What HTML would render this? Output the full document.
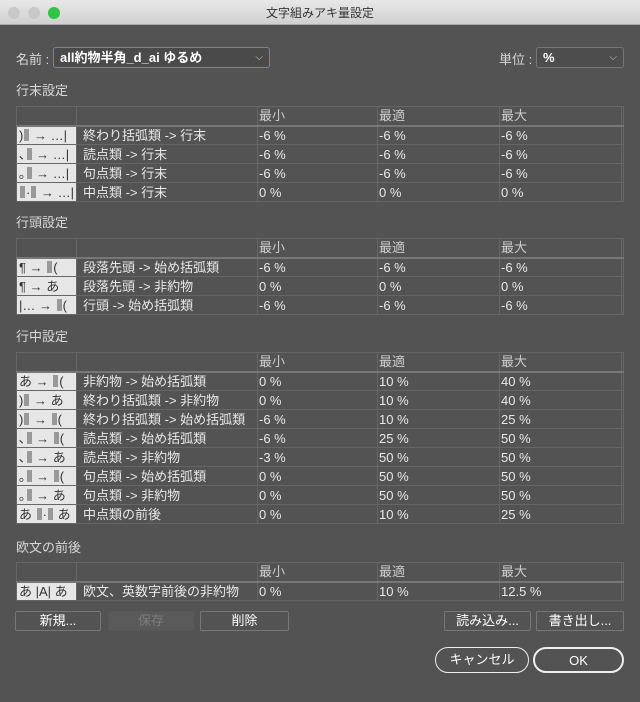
<!DOCTYPE html>
<html><head><meta charset="utf-8"><style>
*{margin:0;padding:0;box-sizing:border-box}
body{width:640px;height:702px;background:#535353;font-family:"Liberation Sans","Noto Sans CJK JP",sans-serif;color:#e6e6e6;font-size:12px;position:relative;overflow:hidden}
.tb{position:absolute;left:0;top:0;width:640px;height:25px;background:linear-gradient(#e8e8e8,#d0d0d0);border-bottom:1px solid #aaa;text-align:center;line-height:26px;font-size:12px;color:#333}
.dot{position:absolute;top:7px;width:12px;height:12px;border-radius:50%}
.lbl{position:absolute;font-size:13px;color:#d8d8d8}
table{position:absolute;left:16px;width:608px;border-collapse:collapse;table-layout:fixed;border:1px solid #666}
td{height:19px;border:1px solid #666;padding:0 0 0 1px;font-size:13px;line-height:17px;white-space:nowrap;overflow:hidden;color:#e8e8e8}
tr.h td{border-bottom:2px solid #777;color:#ccc}
td.ic{background:#e6e6e6;color:#333;padding-left:2px;font-size:13px}
td.l{padding-left:6px}
.b{display:inline-block;width:5px;height:12px;background:#999;vertical-align:-1px;margin:0 1px}
.btn{position:absolute;height:20px;border:1px solid #777;border-radius:2px;text-align:center;line-height:18px;font-size:13px;color:#fff}
.rb{position:absolute;height:26px;border:1.5px solid #eee;border-radius:13px;text-align:center;line-height:23px;font-size:13px;color:#fff}
.sel{position:absolute;top:47px;height:21px;border:1px solid #777;border-radius:3px;padding-left:6px;line-height:19px;font-size:13px;font-weight:bold;color:#fff;background:#4d4d4d}
.chev{position:absolute;right:6px;top:0;font-size:10px;color:#ccc;font-weight:normal}
</style></head><body>
<div class="tb">文字組みアキ量設定</div>
<div class="dot" style="left:8px;background:#c8c8c8"></div>
<div class="dot" style="left:28px;background:#c8c8c8"></div>
<div class="dot" style="left:48px;background:#2ac840"></div>

<div class="lbl" style="left:16px;top:49px">名前 :</div>
<div class="sel" style="left:53px;width:217px;border:1px solid #4a90d9;background:#4a4a4a">all約物半角_d_ai ゆるめ<span class="chev">⌵</span></div>
<div class="lbl" style="left:499px;top:49px">単位 :</div>
<div class="sel" style="left:536px;width:88px">%<span class="chev">⌵</span></div>

<div class="lbl" style="left:16px;top:80px">行末設定</div>
<table style="top:106px"><colgroup><col style="width:60px"><col style="width:181px"><col style="width:120px"><col style="width:122px"><col style="width:122px"><col></colgroup>
<tr class="h"><td></td><td></td><td>最小</td><td>最適</td><td>最大</td><td></td></tr>
<tr><td class="ic">)<span class="b"></span> → …|</td><td class="l">終わり括弧類 -&gt; 行末</td><td>-6 %</td><td>-6 %</td><td>-6 %</td><td></td></tr>
<tr><td class="ic">､<span class="b"></span> → …|</td><td class="l">読点類 -&gt; 行末</td><td>-6 %</td><td>-6 %</td><td>-6 %</td><td></td></tr>
<tr><td class="ic">｡<span class="b"></span> → …|</td><td class="l">句点類 -&gt; 行末</td><td>-6 %</td><td>-6 %</td><td>-6 %</td><td></td></tr>
<tr><td class="ic"><span class="b"></span>·<span class="b"></span> → …|</td><td class="l">中点類 -&gt; 行末</td><td>0 %</td><td>0 %</td><td>0 %</td><td></td></tr>
</table>

<div class="lbl" style="left:16px;top:212px">行頭設定</div>
<table style="top:238px"><colgroup><col style="width:60px"><col style="width:181px"><col style="width:120px"><col style="width:122px"><col style="width:122px"><col></colgroup>
<tr class="h"><td></td><td></td><td>最小</td><td>最適</td><td>最大</td><td></td></tr>
<tr><td class="ic">¶ → <span class="b"></span>(</td><td class="l">段落先頭 -&gt; 始め括弧類</td><td>-6 %</td><td>-6 %</td><td>-6 %</td><td></td></tr>
<tr><td class="ic">¶ → あ</td><td class="l">段落先頭 -&gt; 非約物</td><td>0 %</td><td>0 %</td><td>0 %</td><td></td></tr>
<tr><td class="ic">|… → <span class="b"></span>(</td><td class="l">行頭 -&gt; 始め括弧類</td><td>-6 %</td><td>-6 %</td><td>-6 %</td><td></td></tr>
</table>

<div class="lbl" style="left:16px;top:326px">行中設定</div>
<table style="top:352px"><colgroup><col style="width:60px"><col style="width:181px"><col style="width:120px"><col style="width:122px"><col style="width:122px"><col></colgroup>
<tr class="h"><td></td><td></td><td>最小</td><td>最適</td><td>最大</td><td></td></tr>
<tr><td class="ic">あ → <span class="b"></span>(</td><td class="l">非約物 -&gt; 始め括弧類</td><td>0 %</td><td>10 %</td><td>40 %</td><td></td></tr>
<tr><td class="ic">)<span class="b"></span> → あ</td><td class="l">終わり括弧類 -&gt; 非約物</td><td>0 %</td><td>10 %</td><td>40 %</td><td></td></tr>
<tr><td class="ic">)<span class="b"></span> → <span class="b"></span>(</td><td class="l">終わり括弧類 -&gt; 始め括弧類</td><td>-6 %</td><td>10 %</td><td>25 %</td><td></td></tr>
<tr><td class="ic">､<span class="b"></span> → <span class="b"></span>(</td><td class="l">読点類 -&gt; 始め括弧類</td><td>-6 %</td><td>25 %</td><td>50 %</td><td></td></tr>
<tr><td class="ic">､<span class="b"></span> → あ</td><td class="l">読点類 -&gt; 非約物</td><td>-3 %</td><td>50 %</td><td>50 %</td><td></td></tr>
<tr><td class="ic">｡<span class="b"></span> → <span class="b"></span>(</td><td class="l">句点類 -&gt; 始め括弧類</td><td>0 %</td><td>50 %</td><td>50 %</td><td></td></tr>
<tr><td class="ic">｡<span class="b"></span> → あ</td><td class="l">句点類 -&gt; 非約物</td><td>0 %</td><td>50 %</td><td>50 %</td><td></td></tr>
<tr><td class="ic">あ <span class="b"></span>·<span class="b"></span> あ</td><td class="l">中点類の前後</td><td>0 %</td><td>10 %</td><td>25 %</td><td></td></tr>
</table>

<div class="lbl" style="left:16px;top:537px">欧文の前後</div>
<table style="top:562px"><colgroup><col style="width:60px"><col style="width:181px"><col style="width:120px"><col style="width:122px"><col style="width:122px"><col></colgroup>
<tr class="h"><td></td><td></td><td>最小</td><td>最適</td><td>最大</td><td></td></tr>
<tr><td class="ic">あ |A| あ</td><td class="l">欧文、英数字前後の非約物</td><td>0 %</td><td>10 %</td><td>12.5 %</td><td></td></tr>
</table>

<div class="btn" style="left:15px;top:611px;width:86px">新規...</div>
<div class="btn" style="left:108px;top:611px;width:86px;border-color:#585858;background:#5a5a5a;color:#7c7c7c">保存</div>
<div class="btn" style="left:200px;top:611px;width:89px">削除</div>
<div class="btn" style="left:444px;top:611px;width:87px">読み込み...</div>
<div class="btn" style="left:536px;top:611px;width:88px">書き出し...</div>

<div class="rb" style="left:435px;top:647px;width:94px">キャンセル</div>
<div class="rb" style="left:533px;top:647px;width:91px;border-width:2px">OK</div>
</body></html>
